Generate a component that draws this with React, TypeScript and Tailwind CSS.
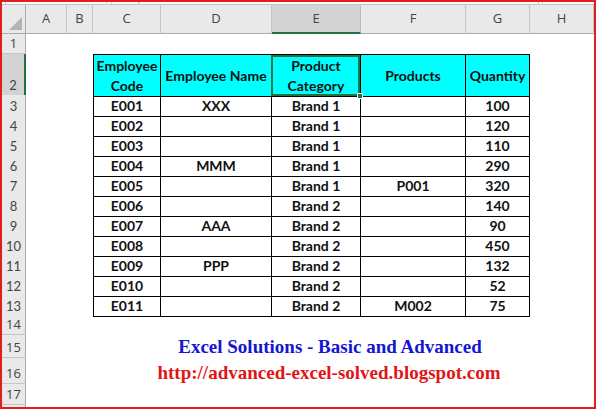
import React from "react";

const GRID = "grid grid-cols-[24px_41px_26px_68px_111px_89px_105px_64px_64px]";

const tableFont = { fontFamily: "Lato, 'Open Sans', sans-serif" } as const;

type DataRow = { n: number; code: string; name: string; cat: string; prod: string; qty: string };

const data: DataRow[] = [
  { n: 3, code: "E001", name: "XXX", cat: "Brand 1", prod: "", qty: "100" },
  { n: 4, code: "E002", name: "", cat: "Brand 1", prod: "", qty: "120" },
  { n: 5, code: "E003", name: "", cat: "Brand 1", prod: "", qty: "110" },
  { n: 6, code: "E004", name: "MMM", cat: "Brand 1", prod: "", qty: "290" },
  { n: 7, code: "E005", name: "", cat: "Brand 1", prod: "P001", qty: "320" },
  { n: 8, code: "E006", name: "", cat: "Brand 2", prod: "", qty: "140" },
  { n: 9, code: "E007", name: "AAA", cat: "Brand 2", prod: "", qty: "90" },
  { n: 10, code: "E008", name: "", cat: "Brand 2", prod: "", qty: "450" },
  { n: 11, code: "E009", name: "PPP", cat: "Brand 2", prod: "", qty: "132" },
  { n: 12, code: "E010", name: "", cat: "Brand 2", prod: "", qty: "52" },
  { n: 13, code: "E011", name: "", cat: "Brand 2", prod: "M002", qty: "75" },
];

function RowHead({ label, selected }: { label: string; selected?: boolean }) {
  return (
    <div
      className={
        selected
          ? "flex items-end justify-center bg-[#d3d3d3] border-b border-b-[#c6c6c6] border-r-2 border-r-[#217346] text-[13px] leading-[18px] pb-[2px] text-[#444]"
          : "flex items-end justify-center bg-[#e9e9e9] border-b border-b-[#c6c6c6] border-r border-r-[#ababab] text-[13px] leading-[18px] pb-[1px] text-[#444]"
      }
    >
      {label}
    </div>
  );
}

function Empty() {
  return <div />;
}

export default function App() {
  const letters = ["A", "B", "C", "D", "E", "F", "G", "H"];
  return (
    <div
      className="w-[596px] h-[409px] bg-white border-2 border-[#e11d1d] overflow-hidden"
      style={{ fontFamily: "'Open Sans', 'Noto Sans', sans-serif" }}
    >
      {/* top strip: bottom edge of name box and formula bar */}
      <div className="h-[3px] flex border-b border-[#c6c6c6]">
        <div className="w-[3px]" />
        <div className="w-[102px] border-x border-[#d0d0d0]" />
        <div className="w-[4px]" />
        <div className="w-[28px] border-x border-[#d0d0d0]" />
        <div className="w-[400px] border-x border-[#d0d0d0]" />
        <div className="w-[3px]" />
        <div className="flex-1 border-l border-[#d0d0d0]" />
      </div>

      {/* column header */}
      <div className={`${GRID} h-[29px] bg-[#e9e9e9]`}>
        <div className="relative border-r border-r-[#ababab] border-b border-b-[#ababab]">
          <svg className="absolute right-[3px] bottom-[3px]" width="13" height="13" viewBox="0 0 13 13">
            <polygon points="13,0 13,13 0,13" fill="#b4b4b4" />
          </svg>
        </div>
        {letters.map((l) =>
          l === "E" ? (
            <div
              key={l}
              className="flex items-center justify-center bg-[#d3d3d3] border-r border-r-[#bcbcbc] border-b-2 border-b-[#217346] text-[13px] text-[#444]"
            >
              {l}
            </div>
          ) : (
            <div
              key={l}
              className="flex items-center justify-center border-r border-r-[#c6c6c6] border-b border-b-[#ababab] text-[13px] text-[#444]"
            >
              {l}
            </div>
          )
        )}
      </div>

      {/* row 1 */}
      <div className={`${GRID} h-[20px]`}>
        <RowHead label="1" />
      </div>

      {/* row 2: table header */}
      <div className={`${GRID} h-[41px]`} style={tableFont}>
        <RowHead label="2" selected />
        <Empty />
        <Empty />
        <div className="flex flex-col items-center justify-center bg-[#00ffff] border border-black font-bold text-[14px] leading-[20px] text-[#111] pt-[1px]">
          <span>Employee</span>
          <span>Code</span>
        </div>
        <div className="flex items-center justify-center bg-[#00ffff] border-y border-r border-black font-bold text-[14px] leading-[20px] text-[#111] pt-[1px]">
          Employee Name
        </div>
        <div className="relative flex flex-col items-center justify-center bg-[#00ffff] border-y border-r border-black font-bold text-[14px] leading-[20px] text-[#111] pt-[1px]">
          <span>Product</span>
          <span>Category</span>
          <div className="absolute -left-[1px] top-0 right-0 bottom-0 border-2 border-[#217346]" />
          <div className="absolute -right-[3px] -bottom-[3px] w-[6px] h-[6px] bg-[#217346] border border-white z-10" />
        </div>
        <div className="flex items-center justify-center bg-[#00ffff] border-y border-r border-black font-bold text-[14px] leading-[20px] text-[#111] pt-[1px]">
          Products
        </div>
        <div className="flex items-center justify-center bg-[#00ffff] border-y border-r border-black font-bold text-[14px] leading-[20px] text-[#111] pt-[1px]">
          Quantity
        </div>
      </div>

      {/* data rows */}
      {data.map((r) => (
        <div key={r.n} className={`${GRID} h-[20px]`} style={tableFont}>
          <RowHead label={String(r.n)} />
          <Empty />
          <Empty />
          <div className="flex items-center justify-center border-x border-b border-black font-bold text-[14px] text-[#111]">
            {r.code}
          </div>
          <div className="flex items-center justify-center border-r border-b border-black font-bold text-[14px] text-[#111]">
            {r.name}
          </div>
          <div className="flex items-center justify-center border-r border-b border-black font-bold text-[14px] text-[#111]">
            {r.cat}
          </div>
          <div className="flex items-center justify-center border-r border-b border-black font-bold text-[14px] text-[#111]">
            {r.prod}
          </div>
          <div className="flex items-center justify-center border-r border-b border-black font-bold text-[14px] text-[#111]">
            {r.qty}
          </div>
        </div>
      ))}

      {/* row 14 */}
      <div className={`${GRID} h-[20px]`}>
        <RowHead label="14" />
      </div>

      {/* row 15 */}
      <div className={`${GRID} h-[23px]`}>
        <RowHead label="15" />
        <div className="col-span-8 flex items-end justify-center pl-[40px]">
          <span
            className="whitespace-nowrap font-bold text-[19px] leading-[22px] text-[#1515d2]"
            style={{ fontFamily: "'Liberation Serif', 'Times New Roman', serif" }}
          >
            Excel Solutions - Basic and Advanced
          </span>
        </div>
      </div>

      {/* row 16 */}
      <div className={`${GRID} h-[26px]`}>
        <RowHead label="16" />
        <div className="col-span-8 flex items-end justify-center pl-[38px]">
          <span
            className="whitespace-nowrap font-bold text-[19px] leading-[22px] text-[#e01616]"
            style={{ fontFamily: "'Liberation Serif', 'Times New Roman', serif" }}
          >
            http://advanced-excel-solved.blogspot.com
          </span>
        </div>
      </div>

      {/* row 17 */}
      <div className={`${GRID} h-[21px]`}>
        <RowHead label="17" />
      </div>

      {/* row 18 (partial) */}
      <div className={`${GRID} h-[4px]`}>
        <div className="bg-[#e9e9e9] border-r border-r-[#ababab]" />
      </div>
    </div>
  );
}
